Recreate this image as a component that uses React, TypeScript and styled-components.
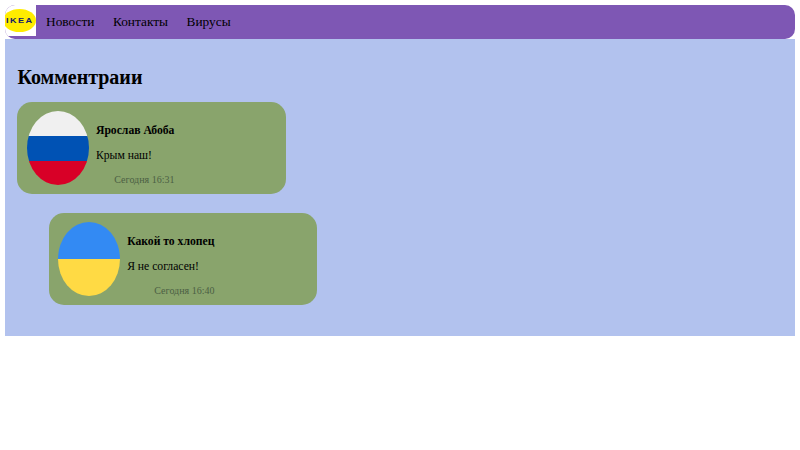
import styled, { createGlobalStyle } from "styled-components";

const GlobalStyle = createGlobalStyle`
  body {
    margin: 5px;
    background-color: #fff;
    font-family: "Liberation Serif", "Times New Roman", serif;
    color: #000;
  }
`;

const Nav = styled.nav`
  display: flex;
  height: 34px;
  background-color: #7e57b4;
  border-radius: 10px;
  overflow: hidden;
`;
const LogoBox = styled.div`
  width: 31px;
  height: 31px;
  background-color: #fff;
  display: flex;
  align-items: center;
  justify-content: flex-end;
  overflow: hidden;
`;
const LogoOval = styled.div`
  flex: none;
  display: flex;
  align-items: center;
  justify-content: center;
  width: 33px;
  height: 23px;
  border-radius: 50%;
  background-color: #ffec00;
`;
const LogoText = styled.span`
  color: #14206a;
  font-family: "Liberation Sans", Arial, sans-serif;
  font-size: 6.5px;
  font-weight: 700;
  letter-spacing: 1px;
  white-space: nowrap;
  transform: scaleX(1.4);
`;
const Menus = styled.ul`
  display: flex;
  align-items: center;
  gap: 18.6px;
  list-style: none;
  margin: 0 0 0 10px;
  padding: 0;
`;
const Menu = styled.li`
  font-size: 13.33px;
  cursor: pointer;
`;
const Main = styled.main`
  background-color: #b2c2ee;
  padding: 26px 12.4px 30.6px;
`;
const Title = styled.h2`
  font-size: 20px;
  font-weight: 700;
  line-height: 24px;
  margin: 0 0 13px;
`;
const Comments = styled.div`
  display: flex;
  flex-direction: column;
  gap: 19.4px;
`;
const Card = styled.div<{ $reply?: boolean }>`
  display: flex;
  align-items: center;
  gap: 7px;
  box-sizing: border-box;
  width: 268.6px;
  height: 92px;
  padding: 0 9.4px;
  margin-left: ${(props) => (props.$reply ? "31.2px" : "0")};
  background-color: #89a46c;
  border-radius: 15px;
`;
const Avatar = styled.div<{ $flag: string }>`
  flex: none;
  width: 62.2px;
  height: 74px;
  border-radius: 50%;
  background: ${(props) => props.$flag};
`;
const Body = styled.div`
  display: flex;
  flex-direction: column;
  align-self: flex-start;
  gap: 10px;
  padding-top: 21px;
`;
const Name = styled.div`
  font-size: 11.67px;
  font-weight: 700;
  line-height: 16px;
`;
const Text = styled.div`
  font-size: 11.67px;
  line-height: 14px;
`;
const Time = styled.div`
  font-size: 10px;
  line-height: 14px;
  text-align: right;
  color: #4c5f44;
`;

const russia =
  "linear-gradient(#f0f0f0 0 33.5%, #0052b4 33.5% 67.5%, #d80027 67.5%)";
const ukraine = "linear-gradient(#338af3 0 49.6%, #ffda44 49.6%)";

const comments = [
  { name: "Ярослав Абоба", text: "Крым наш!", time: "Сегодня 16:31", flag: russia },
  { name: "Какой то хлопец", text: "Я не согласен!", time: "Сегодня 16:40", flag: ukraine, reply: true },
];

function App() {
  return (
    <>
      <GlobalStyle />
      <Nav>
        <LogoBox>
          <LogoOval>
            <LogoText>IKEA</LogoText>
          </LogoOval>
        </LogoBox>
        <Menus>
          <Menu>Новости</Menu>
          <Menu>Контакты</Menu>
          <Menu>Вирусы</Menu>
        </Menus>
      </Nav>
      <Main>
        <Title>Комментраии</Title>
        <Comments>
          {comments.map((c) => (
            <Card key={c.name} $reply={c.reply}>
              <Avatar $flag={c.flag} />
              <Body>
                <Name>{c.name}</Name>
                <Text>{c.text}</Text>
                <Time>{c.time}</Time>
              </Body>
            </Card>
          ))}
        </Comments>
      </Main>
    </>
  );
}

export default App;
